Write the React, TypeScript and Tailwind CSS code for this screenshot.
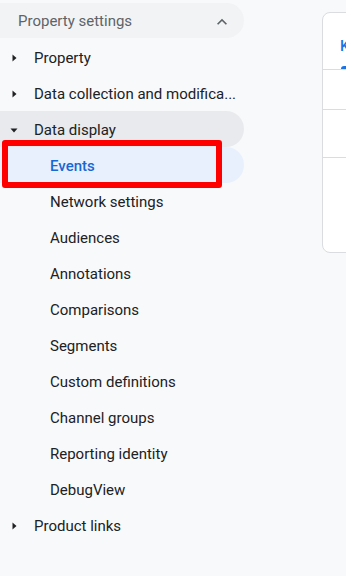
import React from 'react';

const font = { fontFamily: 'Roboto, "Open Sans", sans-serif' };

const Caret: React.FC<{ open?: boolean }> = ({ open }) => (
  <svg width="10" height="10" viewBox="0 0 10 10" className="shrink-0">
    {open ? <path d="M1.5 3.5h7L5 7.5z" fill="#202124" /> : <path d="M3.5 1.5v7L7.5 5z" fill="#202124" />}
  </svg>
);

const subItems = [
  'Events',
  'Network settings',
  'Audiences',
  'Annotations',
  'Comparisons',
  'Segments',
  'Custom definitions',
  'Channel groups',
  'Reporting identity',
  'DebugView',
];

const App: React.FC = () => {
  return (
    <div className="relative w-[346px] h-[576px] overflow-hidden bg-[#f8f9fa]" style={font}>
      <div className="flex">
        {/* Sidebar */}
        <nav className="w-[244px] shrink-0 pt-[3px]">
          <div className="h-[35px] pt-[2px] flex items-center justify-between pl-[18px] pr-[12px] bg-[#f1f3f4] rounded-r-full">
            <span className="text-[15px] text-[#5f6368]">Property settings</span>
            <svg width="20" height="20" viewBox="0 0 24 24">
              <path d="M7.41 15.41L12 10.83l4.59 4.58L18 14l-6-6-6 6z" fill="#5f6368" />
            </svg>
          </div>
          <div className="mt-[1px]">
            <div className="h-[36px] pt-[2px] flex items-center pl-[9px] gap-[15px]">
              <Caret />
              <span className="text-[15px] text-[#202124]">Property</span>
            </div>
            <div className="h-[36px] pt-[2px] flex items-center pl-[9px] gap-[15px]">
              <Caret />
              <span className="text-[15px] text-[#202124] whitespace-nowrap">Data collection and modifica...</span>
            </div>
            <div className="h-[36px] pt-[2px] flex items-center pl-[9px] gap-[15px] bg-[#e8eaed] rounded-r-full">
              <Caret open />
              <span className="text-[15px] text-[#202124]">Data display</span>
            </div>
            {subItems.map((item, i) => (
              <div
                key={item}
                className={
                  i === 0
                    ? 'h-[36px] pt-[2px] flex items-center pl-[50px] bg-[#e8f0fe] rounded-r-full'
                    : 'h-[36px] pt-[2px] flex items-center pl-[50px]'
                }
              >
                <span className={i === 0 ? 'text-[15px] font-medium text-[#1967d2]' : 'text-[15px] text-[#202124]'}>
                  {item}
                </span>
              </div>
            ))}
            <div className="h-[36px] pt-[2px] flex items-center pl-[9px] gap-[15px]">
              <Caret />
              <span className="text-[15px] text-[#202124]">Product links</span>
            </div>
          </div>
        </nav>

        {/* Content card, cut off at the right edge */}
        <div className="ml-[78px] mt-[12px] w-[120px] h-[241px] shrink-0 bg-white border border-[#dadce0] rounded-lg flex flex-col">
          <div className="h-[56px] pl-[17px] pt-[21px] relative">
            <span className="text-[15px] font-medium text-[#1a73e8]">K</span>
            <div className="absolute left-[18px] bottom-0 w-[12px] h-[3px] rounded-t bg-[#1a73e8]" />
          </div>
          <div className="h-[40px] border-t border-[#dadce0]" />
          <div className="h-[48px] border-t border-[#dadce0]" />
          <div className="flex-1 border-t border-[#dadce0]" />
        </div>
      </div>

      {/* Red highlight box */}
      <div className="absolute left-[2px] top-[140px] w-[220px] h-[48px] border-[6px] border-[#ff0000] rounded-[3px]" />
    </div>
  );
};

export default App;
